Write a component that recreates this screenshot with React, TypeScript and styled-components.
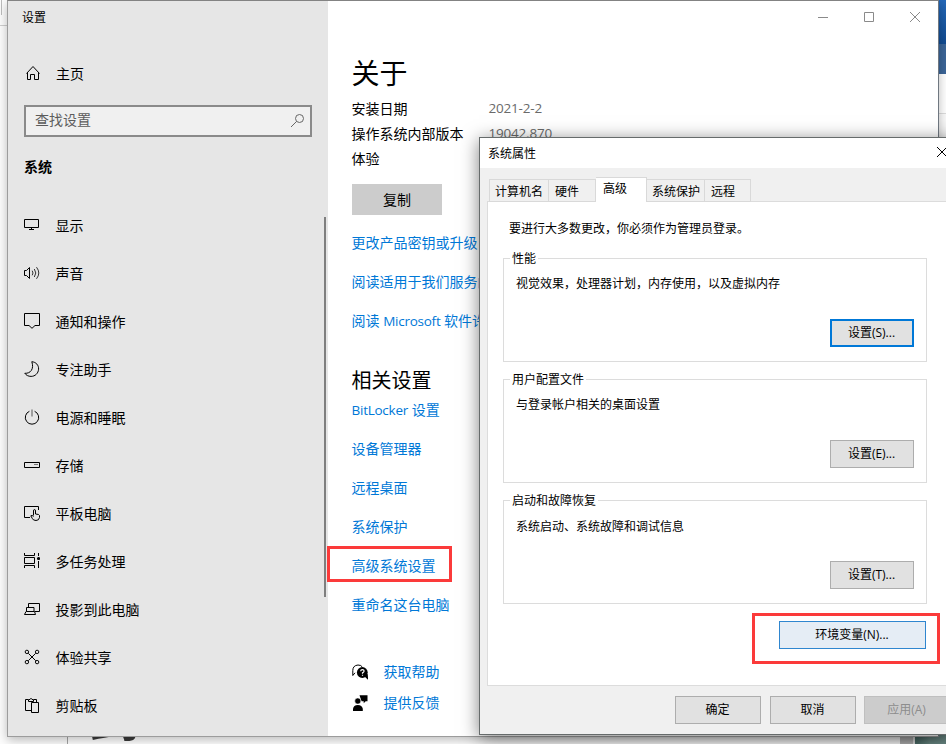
import React from "react";
import styled, { createGlobalStyle, css } from "styled-components";

const GlobalStyle = createGlobalStyle`
  * { box-sizing: border-box; }
  html, body { margin: 0; padding: 0; overflow: hidden; }
  body { font-family: "Noto Sans CJK SC", sans-serif; color: #000; }
`;

const Desktop = styled.div`
  position: relative;
  width: 946px;
  height: 744px;
  overflow: hidden;
  background: #fdfdfd;
  white-space: nowrap;
`;

/* ---------- what shows behind the windows ---------- */

const BackStrip = styled.div`
  position: absolute;
  top: 0;
  right: 0;
  width: 34px;
  height: 744px;
  display: flex;
  flex-direction: column;
`;

const BackBand = styled.div<{ $h: number; $bg: string }>`
  height: ${(p) => p.$h}px;
  background: ${(p) => p.$bg};
`;

const BackLeft = styled.div`
  position: absolute;
  left: 0;
  top: 0;
  width: 8px;
  height: 26px;
  border-bottom: 1px solid #cfcfcf;
  &::before {
    content: "";
    display: block;
    width: 1px;
    height: 15px;
    margin-left: 1px;
    background: #bdbdbd;
  }
`;

const BackPage = styled.div`
  position: absolute;
  left: 67px;
  top: 690px;
  width: 834px;
  height: 54px;
  padding-left: 21px;
  border-left: 1px solid #a5a5a5;
  background: #fff;
  font-size: 50px;
  font-weight: 700;
  line-height: 51px;
  color: #3a3a3a;
`;

const BackGutter = styled.div`
  position: absolute;
  left: 900px;
  top: 730px;
  width: 46px;
  height: 14px;
  background: linear-gradient(
    90deg,
    #b4b4b4 0 13px,
    #e4e4e4 13px 15px,
    #4d6e69 15px 17px,
    #6c8c87 30px
  );
`;

/* ---------- settings window ---------- */

const SettingsWindow = styled.div`
  position: absolute;
  left: 7px;
  top: 0;
  width: 932px;
  height: 737px;
  display: flex;
  border: 1px solid #9c9c9c;
  border-top-color: #838383;
  border-right-color: #6f7780;
  background: #fff;
  box-shadow: 0 3px 10px rgba(0, 0, 0, 0.27);
`;

const Sidebar = styled.aside`
  position: relative;
  width: 320px;
  display: flex;
  flex-direction: column;
  background: #e6e6e6;
`;

const WindowTitle = styled.div`
  height: 32px;
  padding-left: 14px;
  font-size: 12px;
  line-height: 32px;
`;

const HomeRow = styled.div`
  display: flex;
  align-items: center;
  gap: 15px;
  height: 40px;
  margin-top: 20px;
  padding-left: 17px;
  font-size: 14px;
`;

const SearchBox = styled.div`
  display: flex;
  align-items: center;
  justify-content: space-between;
  width: 288px;
  height: 32px;
  margin: 12px 0 0 16px;
  padding: 0 5px 2px 9px;
  border: 2px solid #8a8a8a;
  background: #f0f0f0;
  font-size: 14px;
  line-height: 20px;
  color: #5c5c5c;
`;

const SearchHint = styled.span`
  padding-bottom: 2px;
`;

const SectionName = styled.div`
  height: 40px;
  margin-top: 9px;
  padding-left: 16px;
  font-size: 14px;
  font-weight: 700;
  line-height: 40px;
`;

const NavList = styled.nav`
  display: flex;
  flex-direction: column;
  margin-top: 15px;
`;

const NavItem = styled.div`
  display: flex;
  align-items: center;
  gap: 15.500px;
  height: 48px;
  padding-left: 16px;
  font-size: 14px;
`;

const Scrollbar = styled.div`
  position: absolute;
  right: 2px;
  top: 216px;
  width: 2px;
  height: 380px;
  background: #7f7f7f;
`;

const Main = styled.main`
  flex: 1;
  display: flex;
  flex-direction: column;
  align-items: flex-start;
  padding-left: 23.500px;
`;

const WindowControls = styled.div`
  align-self: flex-end;
  display: flex;
  height: 32px;
`;

const ControlButton = styled.div`
  width: 46px;
  height: 32px;
  display: flex;
  align-items: center;
  justify-content: center;
`;

const Heading = styled.h1`
  height: 40px;
  margin: 19px 0 0;
  font-size: 28px;
  font-weight: 400;
  line-height: 40px;
`;

const InfoRow = styled.div`
  display: flex;
  align-items: center;
  height: 25px;
  font-size: 14px;
`;

const InfoList = styled.div`
  margin-top: 3px;
`;

const InfoLabel = styled.span`
  width: 137px;
`;

const InfoValue = styled.span`
  padding-top: 1px;
  font-family: "Open Sans", sans-serif;
  font-size: 13.500px;
  letter-spacing: -0.2px;
  color: #6a6a6a;
`;

const CopyButton = styled.div`
  display: flex;
  align-items: center;
  justify-content: center;
  width: 90px;
  height: 31px;
  margin: 14px 0 0 0.500px;
  padding-bottom: 2px;
  background: #ccc;
  font-size: 14px;
`;

const LinkList = styled.div<{ $top: number }>`
  display: flex;
  flex-direction: column;
  margin-top: ${(p) => p.$top}px;
`;

const Link = styled.a`
  height: 39px;
  font-family: "Open Sans", "Noto Sans CJK SC", sans-serif;
  font-size: 14px;
  line-height: 39px;
  color: #0078d7;
`;

const Latin = styled.span`
  font-size: 13.500px;
  letter-spacing: -0.25px;
`;

const SubHeading = styled.h2`
  height: 30px;
  margin: 25px 0 0;
  font-size: 20px;
  font-weight: 400;
  line-height: 30px;
`;

const HelpRow = styled.div`
  display: flex;
  align-items: center;
  gap: 16px;
  height: 31px;
  font-size: 14px;
  color: #0078d7;
`;

const HelpLabel = styled.span`
  padding-bottom: 1px;
`;

const HelpList = styled.div`
  margin-top: 32px;
`;

/* ---------- system properties dialog ---------- */

const Dialog = styled.section`
  position: absolute;
  left: 479px;
  top: 137px;
  width: 480px;
  height: 598px;
  display: flex;
  flex-direction: column;
  border: 1px solid #666b6b;
  background: #f0f0f0;
  box-shadow: 0 3px 17px rgba(0, 0, 0, 0.5);
  font-family: "Noto Sans CJK SC", sans-serif;
  font-size: 12px;
`;

const DialogTitle = styled.header`
  display: flex;
  align-items: center;
  justify-content: space-between;
  height: 30px;
  padding: 0 8px 2px 8px;
  background: #fff;
`;

const Tabs = styled.div`
  display: flex;
  align-items: flex-end;
  height: 34px;
  margin: 0 0 -1px 9px;
  z-index: 1;
`;

const Tab = styled.div<{ $w: number; $active?: boolean }>`
  width: ${(p) => p.$w}px;
  height: 23px;
  padding-left: 5px;
  border: 1px solid #d9d9d9;
  border-left-width: 0;
  line-height: 21px;
  &:first-child {
    border-left-width: 1px;
  }
  &:nth-child(2),
  &:last-child {
    padding-left: 6px;
  }
  ${(p) =>
    p.$active &&
    css`
      height: 25px;
      padding-left: 7px;
      border-bottom: 0;
      line-height: 20px;
      background: #fff;
    `}
`;

const TabPage = styled.div`
  display: flex;
  flex-direction: column;
  height: 485px;
  margin: 0 -1px 0 7px;
  padding: 14px 0 0 15px;
  border: 1px solid #dcdcdc;
  background: #fff;
`;

const Notice = styled.p`
  height: 25px;
  margin: 0;
  padding-left: 6px;
  line-height: 24px;
`;

const Group = styled.div`
  display: flex;
  flex-direction: column;
  width: 424px;
  height: 104px;
  margin-top: 17px;
  padding: 0 12px 0 6px;
  border: 1px solid #dcdcdc;
`;

const GroupLabel = styled.div`
  align-self: flex-start;
  height: 16px;
  margin-top: -9px;
  padding: 0 2px;
  background: #fff;
  line-height: 16px;
`;

const GroupText = styled.div<{ $up: boolean }>`
  height: 20px;
  margin-top: 8px;
  padding-left: 6px;
  line-height: ${(p) => (p.$up ? 18 : 20)}px;
`;

const PushButton = styled.div<{ $w: number; $kind?: "focus" | "hot" | "off" }>`
  flex: none;
  display: flex;
  align-items: center;
  justify-content: center;
  width: ${(p) => p.$w}px;
  height: 28px;
  padding: 0 1px 2px 0;
  border: 1px solid #adadad;
  background: #e1e1e1;
  font-family: "Open Sans", "Noto Sans CJK SC", sans-serif;
  ${(p) => p.$kind === "focus" && css`border: 2px solid #0078d7;`}
  ${(p) =>
    p.$kind === "hot" &&
    css`
      border-color: #2f86cf;
      background: #e5edf5;
    `}
  ${(p) =>
    p.$kind === "off" &&
    css`
      margin-left: -1px;
      border-color: #bfbfbf;
      background: #ccc;
      color: #8d8d8d;
    `}
`;

const GroupAction = styled.div`
  align-self: flex-end;
  margin-top: 25px;
`;

const EnvAction = styled.div`
  margin: 17px 0 0 276px;
`;

const DialogButtons = styled.footer`
  display: flex;
  gap: 9px;
  margin: 10px 0 0 195px;
`;

/* ---------- red annotation frames ---------- */

const Mark = styled.div<{ $x: number; $y: number; $w: number; $h: number }>`
  position: absolute;
  left: ${(p) => p.$x}px;
  top: ${(p) => p.$y}px;
  width: ${(p) => p.$w}px;
  height: ${(p) => p.$h}px;
  border: 3px solid #fb3a3a;
`;

/* ---------- icons ---------- */

const IconSvg = styled.svg`
  flex: none;
  display: block;
  width: 16px;
  height: 16px;
  fill: none;
  stroke: #000;
  stroke-width: 1;
`;

const Icon = ({ children }: { children: React.ReactNode }) => (
  <IconSvg viewBox="0 0 16 16">{children}</IconSvg>
);

const nav: [string, React.ReactNode][] = [
  ["显示", <path d="M.5 2.500h14v8H.5zM7.500 11v1.500M5 12.500h5" />],
  [
    "声音",
    <>
      <path d="M5.500 2.500v11l-3-3h-2v-5h2z" />
      <path d="M8.200 5.700q1.600 2.300 0 4.600M10.300 4q3 4 0 8M12.500 2.200q4.600 5.800 0 11.600" stroke="#333" />
    </>,
  ],
  ["通知和操作", <path d="M.5.5h15v12H11L8 15.300 5 12.500H.5z" />],
  [
    "专注助手",
    <path d="M7.800.7c4.300.4 7 3.500 6.800 7.500-.3 4.100-3.500 7.200-7.500 7.200-2.800 0-5-1.200-6.300-3.100C6.500 12.700 10.300 8 7.800.7z" />,
  ],
  [
    "电源和睡眠",
    <>
      <path d="M5.400 2.300a6.700 6.700 0 1 0 5.200 0" />
      <path d="M8 .5v7" stroke="#555" />
    </>,
  ],
  ["存储", <path d="M.5 5.500h15v5H.5zM10.500 7.500h1M12.500 7.500h1" />],
  [
    "平板电脑",
    <>
      <path d="M14.500 5V1.500H.5v11H6" />
      <path d="M9.500 10.500V6q0-1.500 1-1.500t1 1.500v3q4 .2 4 1.500v2q-.5 3-3.500 3t-3.800-2.200L6.800 10.800q1.200-1.200 2.700.7" />
    </>,
  ],
  [
    "多任务处理",
    <>
      <path d="M.5 0v2.500h10V0M.5 4.500h10v6H.5zM.5 15v-2.500h10V15M14.500 0v3M14.500 8v7" />
      <circle cx="14.500" cy="5.500" r="1.600" fill="#000" stroke="none" />
    </>,
  ],
  ["投影到此电脑", <path d="M4.500 6V2.500h11v8H11M2.500 10.500v-4H10v4M2.500 10.500h8l1 3H.5l1.500-3z" />],
  [
    "体验共享",
    <>
      <path d="M4.300 4.300l7.400 7.400M11.700 4.300l-7.400 7.400" />
      <circle cx="2.900" cy="2.900" r="1.700" />
      <circle cx="13.100" cy="2.900" r="1.700" />
      <circle cx="2.900" cy="13.100" r="1.700" />
      <circle cx="13.100" cy="13.100" r="1.700" />
      <circle cx="8" cy="8" r="1.100" fill="#000" stroke="none" />
    </>,
  ],
  [
    "剪贴板",
    <path d="M7 13.500H1.500v-11H4M10 2.500h2.500V5M4.500 4.500v-2H6q1-2.500 2 0h1.500v2zM7.500 5.500h7v10h-7z" />,
  ],
];

const relatedLinks = ["设备管理器", "远程桌面", "系统保护", "高级系统设置", "重命名这台电脑"];

const groups: { label: string; text: string; action: string; up: boolean; focus?: boolean }[] = [
  { label: "性能", text: "视觉效果，处理器计划，内存使用，以及虚拟内存", action: "设置(S)...", up: true, focus: true },
  { label: "用户配置文件", text: "与登录帐户相关的桌面设置", action: "设置(E)...", up: true },
  { label: "启动和故障恢复", text: "系统启动、系统故障和调试信息", action: "设置(T)...", up: false },
];

export default function App() {
  return (
    <Desktop>
      <GlobalStyle />
      <BackLeft />
      <BackStrip>
        <BackBand $h={44} $bg="linear-gradient(#2468b9, #114b91)" />
        <BackBand $h={30} $bg="#3b6598" />
        <BackBand $h={39} $bg="#fff" />
        <BackBand $h={1} $bg="#ddd" />
        <BackBand $h={630} $bg="#fbfbfb" />
      </BackStrip>
      <BackPage>到</BackPage>
      <BackGutter />

      <SettingsWindow>
        <Sidebar>
          <WindowTitle>设置</WindowTitle>
          <HomeRow>
            <Icon>
              <path d="M1.500 8.500L8 1.500l6.500 7M2.500 7.500v7h3v-5h4v5h4v-7" />
            </Icon>
            主页
          </HomeRow>
          <SearchBox>
            <SearchHint>查找设置</SearchHint>
            <Icon>
              <g stroke="#666">
                <circle cx="10.500" cy="6.500" r="4" />
                <path d="M7.600 9.400L2 15" />
              </g>
            </Icon>
          </SearchBox>
          <SectionName>系统</SectionName>
          <NavList>
            {nav.map(([label, icon]) => (
              <NavItem key={label}>
                <Icon>{icon}</Icon>
                {label}
              </NavItem>
            ))}
          </NavList>
          <Scrollbar />
        </Sidebar>

        <Main>
          <WindowControls>
            <ControlButton>
              <Icon><path d="M3 8.500h10" stroke="#8a8a8a" /></Icon>
            </ControlButton>
            <ControlButton>
              <Icon><path d="M3.500 3.500h9v9h-9z" stroke="#8a8a8a" /></Icon>
            </ControlButton>
            <ControlButton>
              <Icon><path d="M3 3l10 10M13 3L3 13" stroke="#8a8a8a" /></Icon>
            </ControlButton>
          </WindowControls>
          <Heading>关于</Heading>
          <InfoList>
            <InfoRow>
              <InfoLabel>安装日期</InfoLabel>
              <InfoValue>2021-2-2</InfoValue>
            </InfoRow>
            <InfoRow>
              <InfoLabel>操作系统内部版本</InfoLabel>
              <InfoValue>19042.870</InfoValue>
            </InfoRow>
            <InfoRow>
              <InfoLabel>体验</InfoLabel>
            </InfoRow>
          </InfoList>
          <CopyButton>复制</CopyButton>
          <LinkList $top={8}>
            <Link>更改产品密钥或升级</Link>
            <Link>阅读适用于我们服务的</Link>
            <Link>阅读 <Latin>Microsoft</Latin> 软件许</Link>
          </LinkList>
          <SubHeading>相关设置</SubHeading>
          <LinkList $top={-5}>
            <Link><Latin>BitLocker</Latin> 设置</Link>
            {relatedLinks.map((t) => (
              <Link key={t}>{t}</Link>
            ))}
          </LinkList>
          <HelpList>
            <HelpRow>
              <Icon>
                <path d="M3 8.800L.8 11.500V6.500q0-5 5.200-5.500 3.200 0 4.300 2" />
                <circle cx="10.300" cy="8.500" r="5.400" fill="#000" stroke="none" />
                <path d="M12 12l4.200 4-.5-6z" fill="#000" stroke="none" />
                <path d="M8.700 7.300q0-1.700 1.700-1.700t1.700 1.500q0 1-1.600 1.800v.8M10.500 10.800v1" stroke="#fff" strokeWidth="1.200" />
              </Icon>
              <HelpLabel>获取帮助</HelpLabel>
            </HelpRow>
            <HelpRow>
              <Icon>
                <g fill="#000" stroke="none">
                  <path d="M7.500.3h8v6h-1.800l-2 2v-2H9.500z" />
                  <circle cx="5.800" cy="6" r="3.100" stroke="#fff" strokeWidth=".6" />
                  <path d="M1 16v-2.200q.5-3.800 4.800-3.800t5 3.800V16z" />
                </g>
              </Icon>
              <HelpLabel>提供反馈</HelpLabel>
            </HelpRow>
          </HelpList>
        </Main>
      </SettingsWindow>

      <Dialog>
        <DialogTitle>
          系统属性
          <Icon><path d="M3 3l10 10M13 3L3 13" /></Icon>
        </DialogTitle>
        <Tabs>
          <Tab $w={60}>计算机名</Tab>
          <Tab $w={47}>硬件</Tab>
          <Tab $w={51} $active>高级</Tab>
          <Tab $w={58}>系统保护</Tab>
          <Tab $w={46}>远程</Tab>
        </Tabs>
        <TabPage>
          <Notice>要进行大多数更改，你必须作为管理员登录。</Notice>
          {groups.map((g) => (
            <Group key={g.label}>
              <GroupLabel>{g.label}</GroupLabel>
              <GroupText $up={g.up}>{g.text}</GroupText>
              <GroupAction>
                <PushButton $w={84} $kind={g.focus ? "focus" : undefined}>{g.action}</PushButton>
              </GroupAction>
            </Group>
          ))}
          <EnvAction>
            <PushButton $w={147} $kind="hot">环境变量(N)...</PushButton>
          </EnvAction>
        </TabPage>
        <DialogButtons>
          <PushButton $w={86}>确定</PushButton>
          <PushButton $w={86}>取消</PushButton>
          <PushButton $w={86} $kind="off">应用(A)</PushButton>
        </DialogButtons>
      </Dialog>

      <Mark $x={327} $y={546} $w={125} $h={36} />
      <Mark $x={752} $y={613} $w={188} $h={51} />
    </Desktop>
  );
}
